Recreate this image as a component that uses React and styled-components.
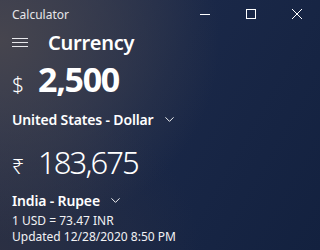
import React from 'react'
import styled, { createGlobalStyle } from 'styled-components'
import { ChevronDown } from 'lucide-react'

const GlobalStyle = createGlobalStyle`
  html, body {
    margin: 0;
    padding: 0;
  }
  body {
    font-family: 'Segoe UI', 'Noto Sans', sans-serif;
    color: #fff;
  }
`

const Window = styled.div`
  width: 320px;
  height: 250px;
  overflow: hidden;
  display: flex;
  flex-direction: column;
  background:
    radial-gradient(ellipse 220px 200px at 0px 40px, rgba(72, 70, 78, 0.95), rgba(72, 70, 78, 0) 100%),
    radial-gradient(ellipse 200px 160px at 0px 250px, rgba(44, 48, 66, 0.9), rgba(44, 48, 66, 0) 100%),
    linear-gradient(120deg, #2a3450 0%, #1a2848 45%, #13213f 100%);
`

const TitleBar = styled.div`
  height: 28px;
  display: flex;
  align-items: center;
  padding-left: 12px;
`

const AppName = styled.span`
  font-size: 12px;
  color: #e6e6ea;
  flex: 1;
`

const WinButton = styled.div`
  width: 46px;
  height: 28px;
  display: flex;
  align-items: center;
  justify-content: center;
`

const Header = styled.div`
  display: flex;
  align-items: center;
  height: 28px;
  padding-left: 12px;
  gap: 20px;
`

const Burger = styled.div`
  width: 16px;
  display: flex;
  flex-direction: column;
  gap: 3px;
  span {
    height: 1px;
    background: #e8e8ec;
  }
`

const Title = styled.h1`
  margin: 0;
  font-size: 20px;
  font-weight: 600;
  letter-spacing: -0.2px;
`

const Section = styled.div`
  padding-left: 12px;
  display: flex;
  flex-direction: column;
`

const AmountRow = styled.div`
  display: flex;
  align-items: baseline;
  height: 44px;
  margin-top: ${p => p.$top}px;
`

const Symbol = styled.span`
  font-size: 21px;
  font-weight: 300;
  width: 26px;
`

const Amount = styled.span`
  font-size: ${p => (p.$bold ? 34 : 31)}px;
  font-weight: ${p => (p.$bold ? 700 : 300)};
  letter-spacing: ${p => (p.$bold ? -1.3 : -1.9)}px;
`

const UnitRow = styled.div`
  display: flex;
  align-items: center;
  gap: 8px;
  height: 24px;
  margin-top: ${p => p.$top}px;
  font-size: 14px;
  font-weight: 600;
  letter-spacing: -0.15px;
`

const InfoBlock = styled.div`
  margin-top: 1px;
  font-size: 12px;
  line-height: 16px;
  color: #f2f2f4;
`

const App = () => {
  return (
    <>
      <GlobalStyle />
      <Window>
        <TitleBar>
          <AppName>Calculator</AppName>
          <WinButton>
            <svg width="10" height="10" viewBox="0 0 10 10">
              <line x1="0" y1="5.5" x2="10" y2="5.5" stroke="#fff" strokeWidth="1" />
            </svg>
          </WinButton>
          <WinButton>
            <svg width="10" height="10" viewBox="0 0 10 10">
              <rect x="0.5" y="0.5" width="9" height="9" fill="none" stroke="#fff" strokeWidth="1" />
            </svg>
          </WinButton>
          <WinButton>
            <svg width="10" height="10" viewBox="0 0 10 10">
              <path d="M0 0 L10 10 M10 0 L0 10" stroke="#fff" strokeWidth="1" />
            </svg>
          </WinButton>
        </TitleBar>
        <Header>
          <Burger>
            <span />
            <span />
            <span />
          </Burger>
          <Title>Currency</Title>
        </Header>
        <Section>
          <AmountRow $top={0}>
            <Symbol>$</Symbol>
            <Amount $bold>2,500</Amount>
          </AmountRow>
          <UnitRow $top={7}>
            United States - Dollar
            <ChevronDown size={15} strokeWidth={1.5} />
          </UnitRow>
          <AmountRow $top={10}>
            <Symbol>₹</Symbol>
            <Amount>183,675</Amount>
          </AmountRow>
          <UnitRow $top={3}>
            India - Rupee
            <ChevronDown size={15} strokeWidth={1.5} />
          </UnitRow>
          <InfoBlock>
            <div>1 USD = 73.47 INR</div>
            <div>Updated 12/28/2020 8:50 PM</div>
          </InfoBlock>
        </Section>
      </Window>
    </>
  )
}

export default App
